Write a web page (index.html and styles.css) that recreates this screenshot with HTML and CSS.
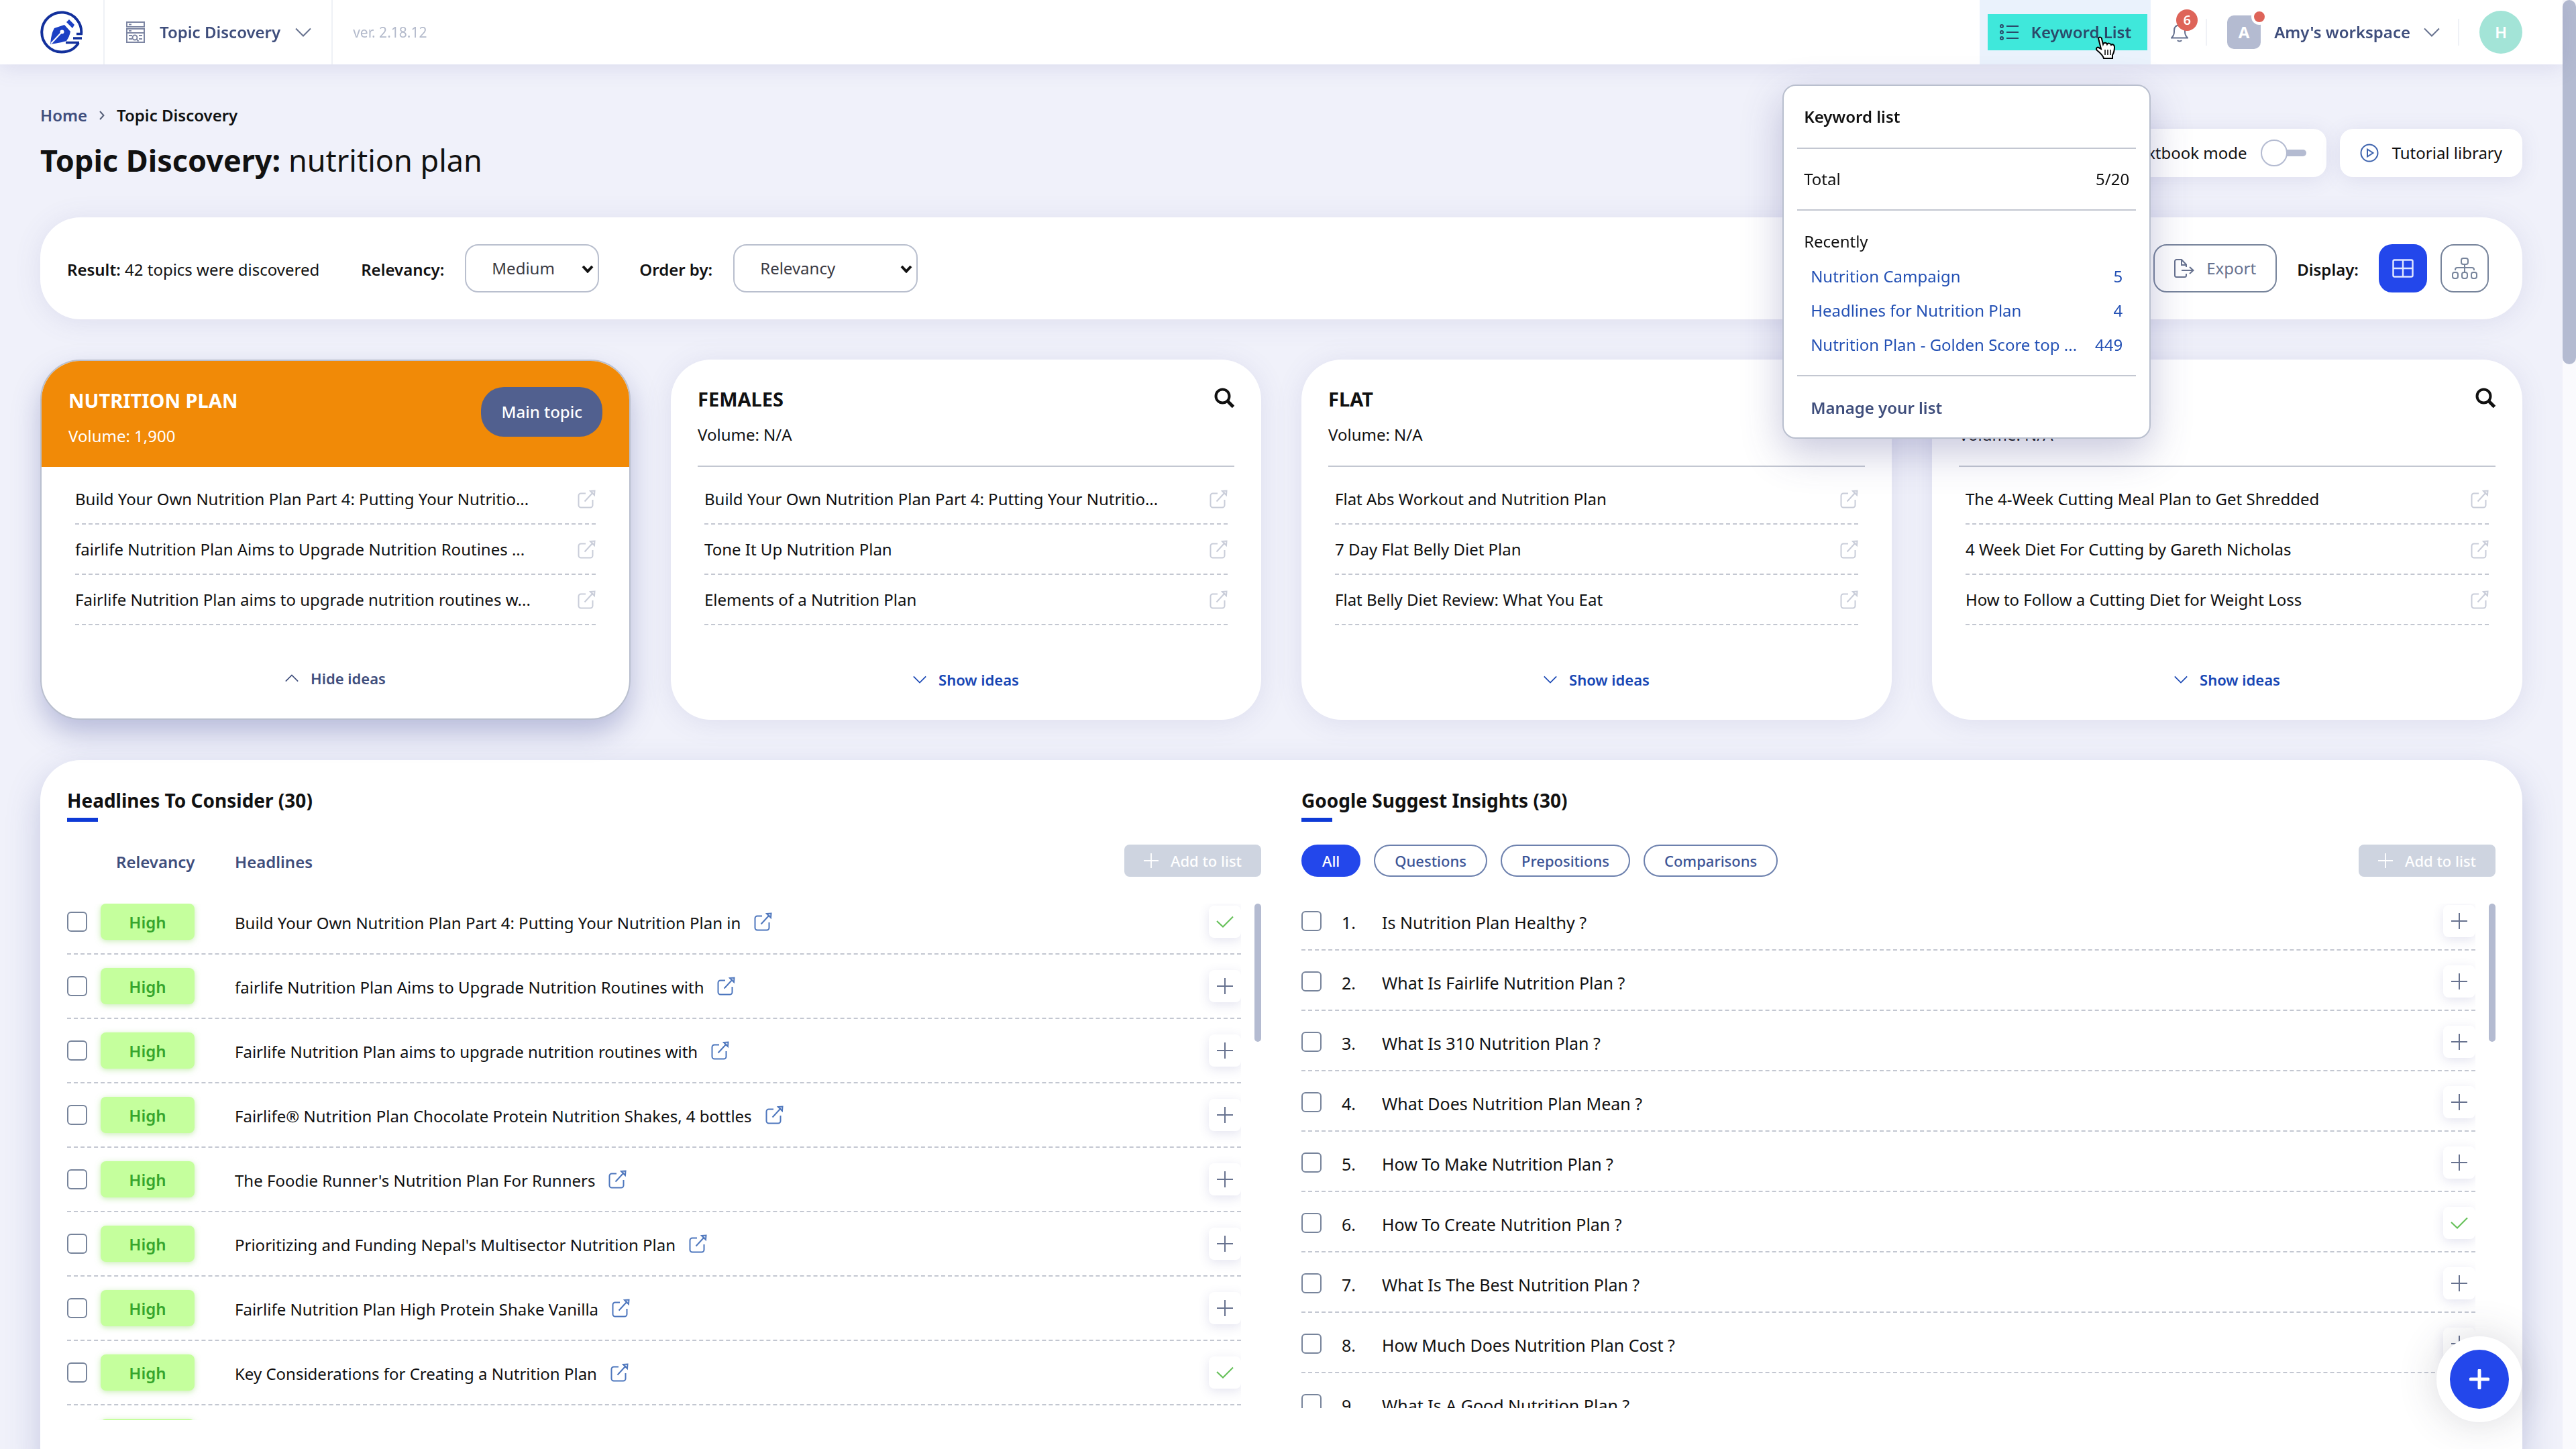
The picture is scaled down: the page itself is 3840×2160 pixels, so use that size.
FILE: index.html
```html
<!DOCTYPE html>
<html lang="en">
<head>
  <meta charset="UTF-8">
  <title>Topic Discovery</title>
  <link rel="stylesheet" href="styles.css">
</head>
<body>

  <!-- icon sprite -->
  <svg class="sprite" aria-hidden="true">
    <symbol id="i-down" viewBox="0 0 24 14"><path d="M1 1.5l11 11 11-11" fill="none" stroke="currentColor" stroke-width="2"/></symbol>
    <symbol id="i-up" viewBox="0 0 24 14"><path d="M1 12.500l11-11 11 11" fill="none" stroke="currentColor" stroke-width="2"/></symbol>
    <symbol id="i-caret" viewBox="0 0 18 12"><path d="M2 2l7 7.500 7-7.500" fill="none" stroke="currentColor" stroke-width="4"/></symbol>
    <symbol id="i-plus" viewBox="0 0 24 24"><path d="M12 0v24M0 12h24" fill="none" stroke="currentColor" stroke-width="2"/></symbol>
    <symbol id="i-check" viewBox="0 0 26 18"><path d="M1 8l9 8.500L25 1.500" fill="none" stroke="currentColor" stroke-width="2"/></symbol>
    <symbol id="i-ext" viewBox="0 0 27 28"><path d="M12 5.500H5a3.500 3.500 0 0 0-3.500 3.500v14A3.500 3.500 0 0 0 5 26.500h14a3.500 3.500 0 0 0 3.500-3.500v-8M10.500 17.500L23 4M19 2l6.500-.5-.5 6.500z" fill="none" stroke="currentColor" stroke-width="2"/></symbol>
    <symbol id="i-search" viewBox="0 0 30 30"><circle cx="12.500" cy="12.500" r="10" fill="none" stroke="currentColor" stroke-width="4"/><path d="M19.500 19.500l9 9" stroke="currentColor" stroke-width="5"/></symbol>
  </svg>

  <header class="topbar">
    <a class="logo" href="#" aria-label="Dashboard">
      <svg viewBox="0 0 64 64" width="64" height="64">
        <path d="M61 36A29.500 29.500 0 1 0 32 61.500c11 0 19.500-4.500 25-13.500" fill="none" stroke="#12309c" stroke-width="4"/>
        <path d="M38 47.500h20M49 41h13M54 34.500h8" stroke="#12309c" stroke-width="3.500"/>
        <path d="M15 50c1-10 2-17 6-24l15-5 9 10c-1 5-3 10-6 14-6 2-12 3-24 5z" fill="#1c40c4"/>
        <path d="M39 17l4-4 8 8-3 5z" fill="#1c40c4"/>
        <path d="M16 49l15-16" stroke="#fff" stroke-width="2"/>
        <circle cx="32.500" cy="31.500" r="3" fill="#fff"/>
      </svg>
    </a>
    <button class="nav-item">
      <svg viewBox="0 0 28 32" width="28" height="32" fill="none" stroke="currentColor" stroke-width="2">
        <rect x="1" y="1" width="26" height="7"/><rect x="1" y="11" width="26" height="20"/>
        <path d="M1 17h26M4 4.500h4M4 14h4M4 21h5M4 26h5M19 21h5M19 26h5"/><circle cx="13" cy="24" r="3.500"/><path d="M15.500 26.500l3 3"/>
      </svg>
      <span>Topic Discovery</span>
      <svg class="chev"><use href="#i-down"/></svg>
    </button>
    <span class="version">ver. 2.18.12</span>

    <div class="keyword-menu">
      <button class="keyword-btn">
        <svg viewBox="0 0 28 24" width="28" height="24" fill="none" stroke="currentColor" stroke-width="2">
          <circle cx="3" cy="3" r="2"/><circle cx="3" cy="12" r="2"/><circle cx="3" cy="21" r="2"/><path d="M10 3h18M10 12h18M10 21h18"/>
        </svg>
        <span>Keyword List</span>
      </button>
      <svg class="pointer" viewBox="0 0 32 36" width="32" height="36">
        <path d="M6 3c2-3 5-1 5 1l2 8c1-3 5-3 6 0 1-2 5-2 6 1 2-2 5 0 5 3 0 7-1 9-3 12v5H14c-1-4-5-8-10-12-3-3 1-6 4-3l2 1z" fill="#fff" stroke="#000" stroke-width="2"/>
        <path d="M16 20v8M20 20v8M24 20v8" stroke="#000" stroke-width="1.500"/>
      </svg>

      <div class="dropdown">
        <div class="dropdown-title">Keyword list</div>
        <div class="dropdown-total"><span>Total</span><span>5/20</span></div>
        <div class="dropdown-recent">
          <div class="recent-label">Recently</div>
          <a class="recent" href="#"><span>Nutrition Campaign</span><span>5</span></a>
          <a class="recent" href="#"><span>Headlines for Nutrition Plan</span><span>4</span></a>
          <a class="recent" href="#"><span>Nutrition Plan - Golden Score top ...</span><span>449</span></a>
        </div>
        <a class="manage" href="#">Manage your list</a>
      </div>
    </div>

    <button class="bell" aria-label="Notifications">
      <svg viewBox="0 0 26 32" width="26" height="32" fill="none" stroke="currentColor" stroke-width="2">
        <path d="M1 24.500c3-3 4-5 4-9v-2c0-5 3-8 8-8s8 3 8 8v2c0 4 1 6 4 9zM10 28c1 2 5 2 6 0"/>
      </svg>
      <span class="count">6</span>
    </button>
    <span class="sep"></span>
    <button class="workspace">
      <span class="ws-avatar">A</span>
      <span>Amy's workspace</span>
      <svg class="chev"><use href="#i-down"/></svg>
    </button>
    <span class="sep"></span>
    <button class="user">H</button>
  </header>

  <main class="page">
    <div class="page-head">
      <div>
        <nav class="breadcrumb">
          <a href="#">Home</a>
          <svg viewBox="0 0 8 14" width="8" height="14"><path d="M1 1l5.500 6L1 13" fill="none" stroke="#555f78" stroke-width="2"/></svg>
          <span>Topic Discovery</span>
        </nav>
        <h1>Topic Discovery: <span>nutrition plan</span></h1>
      </div>
      <div class="head-actions">
        <label class="head-card">Textbook mode <input type="checkbox" class="toggle"></label>
        <button class="head-card">
          <svg viewBox="0 0 28 28" width="28" height="28" fill="none" stroke="#3c62ad" stroke-width="2"><circle cx="14" cy="14" r="12.500"/><path d="M11 8.500l8.500 5.500-8.500 5.500z"/></svg>
          Tutorial library
        </button>
      </div>
    </div>

    <section class="filters">
      <p class="result"><b>Result:</b> 42 topics were discovered</p>
      <label for="relevancy">Relevancy:</label>
      <div class="select">
        <select id="relevancy"><option>Medium</option></select>
        <svg class="caret"><use href="#i-caret"/></svg>
      </div>
      <label for="order">Order by:</label>
      <div class="select wide">
        <select id="order"><option>Relevancy</option></select>
        <svg class="caret"><use href="#i-caret"/></svg>
      </div>
      <button class="export">
        <svg viewBox="0 0 30 28" width="30" height="28" fill="none" stroke="currentColor" stroke-width="2">
          <path d="M18 22v2.500a2.500 2.500 0 0 1-2.500 2.500h-12A2.500 2.500 0 0 1 1 24.500v-21A2.500 2.500 0 0 1 3.500 1H11l7 7.500V12M11 1v8h7M11 17h17M23 12l5.500 5-5.500 5"/>
        </svg>
        Export
      </button>
      <span class="display-label">Display:</span>
      <button class="view-btn active" aria-label="Grid view">
        <svg viewBox="0 0 32 28" width="32" height="28" fill="none" stroke="currentColor" stroke-width="2.500"><rect x="1.500" y="1.500" width="29" height="25" rx="2"/><path d="M16 1v26M1 14h30"/></svg>
      </button>
      <button class="view-btn" aria-label="Tree view">
        <svg viewBox="0 0 38 32" width="38" height="32" fill="none" stroke="currentColor" stroke-width="2">
          <rect x="14" y="1" width="10" height="9" rx="3"/><path d="M19 10v11M5 19v-1a3 3 0 0 1 3-3h22a3 3 0 0 1 3 3v1"/>
          <rect x="1" y="22" width="8" height="9" rx="3"/><rect x="15" y="22" width="8" height="9" rx="3"/><rect x="29" y="22" width="8" height="9" rx="3"/>
        </svg>
      </button>
    </section>

    <section class="cards">
      <article class="card main">
        <div class="card-head">
          <div>
            <h2>NUTRITION PLAN</h2>
            <p>Volume: 1,900</p>
          </div>
          <button class="main-topic">Main topic</button>
        </div>
        <ul class="ideas">
          <li><span>Build Your Own Nutrition Plan Part 4: Putting Your Nutritio...</span><svg><use href="#i-ext"/></svg></li>
          <li><span>fairlife Nutrition Plan Aims to Upgrade Nutrition Routines ...</span><svg><use href="#i-ext"/></svg></li>
          <li><span>Fairlife Nutrition Plan aims to upgrade nutrition routines w...</span><svg><use href="#i-ext"/></svg></li>
        </ul>
        <button class="toggle-ideas"><svg><use href="#i-up"/></svg>Hide ideas</button>
      </article>

      <article class="card">
        <div class="card-head">
          <div>
            <h2>FEMALES</h2>
            <p>Volume: N/A</p>
          </div>
          <button class="search" aria-label="Search"><svg><use href="#i-search"/></svg></button>
        </div>
        <ul class="ideas">
          <li><span>Build Your Own Nutrition Plan Part 4: Putting Your Nutritio...</span><svg><use href="#i-ext"/></svg></li>
          <li><span>Tone It Up Nutrition Plan</span><svg><use href="#i-ext"/></svg></li>
          <li><span>Elements of a Nutrition Plan</span><svg><use href="#i-ext"/></svg></li>
        </ul>
        <button class="toggle-ideas"><svg><use href="#i-down"/></svg>Show ideas</button>
      </article>

      <article class="card">
        <div class="card-head">
          <div>
            <h2>FLAT</h2>
            <p>Volume: N/A</p>
          </div>
        </div>
        <ul class="ideas">
          <li><span>Flat Abs Workout and Nutrition Plan</span><svg><use href="#i-ext"/></svg></li>
          <li><span>7 Day Flat Belly Diet Plan</span><svg><use href="#i-ext"/></svg></li>
          <li><span>Flat Belly Diet Review: What You Eat</span><svg><use href="#i-ext"/></svg></li>
        </ul>
        <button class="toggle-ideas"><svg><use href="#i-down"/></svg>Show ideas</button>
      </article>

      <article class="card">
        <div class="card-head">
          <div>
            <h2>&nbsp;</h2>
            <p>Volume: N/A</p>
          </div>
          <button class="search" aria-label="Search"><svg><use href="#i-search"/></svg></button>
        </div>
        <ul class="ideas">
          <li><span>The 4-Week Cutting Meal Plan to Get Shredded</span><svg><use href="#i-ext"/></svg></li>
          <li><span>4 Week Diet For Cutting by Gareth Nicholas</span><svg><use href="#i-ext"/></svg></li>
          <li><span>How to Follow a Cutting Diet for Weight Loss</span><svg><use href="#i-ext"/></svg></li>
        </ul>
        <button class="toggle-ideas"><svg><use href="#i-down"/></svg>Show ideas</button>
      </article>
    </section>

    <section class="panel">
      <div class="column">
        <h3>Headlines To Consider (30)</h3>
        <div class="toolbar">
          <span class="th-rel">Relevancy</span>
          <span>Headlines</span>
          <button class="add" disabled><svg><use href="#i-plus"/></svg>Add to list</button>
        </div>
        <div class="scroller">
          <ul class="rows headlines">
            <li><input type="checkbox" id="h1"><span class="badge">High</span><label for="h1">Build Your Own Nutrition Plan Part 4: Putting Your Nutrition Plan in</label><svg class="ext"><use href="#i-ext"/></svg><button class="row-btn done" aria-label="Added"><svg><use href="#i-check"/></svg></button></li>
            <li><input type="checkbox" id="h2"><span class="badge">High</span><label for="h2">fairlife Nutrition Plan Aims to Upgrade Nutrition Routines with</label><svg class="ext"><use href="#i-ext"/></svg><button class="row-btn" aria-label="Add"><svg><use href="#i-plus"/></svg></button></li>
            <li><input type="checkbox" id="h3"><span class="badge">High</span><label for="h3">Fairlife Nutrition Plan aims to upgrade nutrition routines with</label><svg class="ext"><use href="#i-ext"/></svg><button class="row-btn" aria-label="Add"><svg><use href="#i-plus"/></svg></button></li>
            <li><input type="checkbox" id="h4"><span class="badge">High</span><label for="h4">Fairlife® Nutrition Plan Chocolate Protein Nutrition Shakes, 4 bottles</label><svg class="ext"><use href="#i-ext"/></svg><button class="row-btn" aria-label="Add"><svg><use href="#i-plus"/></svg></button></li>
            <li><input type="checkbox" id="h5"><span class="badge">High</span><label for="h5">The Foodie Runner's Nutrition Plan For Runners</label><svg class="ext"><use href="#i-ext"/></svg><button class="row-btn" aria-label="Add"><svg><use href="#i-plus"/></svg></button></li>
            <li><input type="checkbox" id="h6"><span class="badge">High</span><label for="h6">Prioritizing and Funding Nepal's Multisector Nutrition Plan</label><svg class="ext"><use href="#i-ext"/></svg><button class="row-btn" aria-label="Add"><svg><use href="#i-plus"/></svg></button></li>
            <li><input type="checkbox" id="h7"><span class="badge">High</span><label for="h7">Fairlife Nutrition Plan High Protein Shake Vanilla</label><svg class="ext"><use href="#i-ext"/></svg><button class="row-btn" aria-label="Add"><svg><use href="#i-plus"/></svg></button></li>
            <li><input type="checkbox" id="h8"><span class="badge">High</span><label for="h8">Key Considerations for Creating a Nutrition Plan</label><svg class="ext"><use href="#i-ext"/></svg><button class="row-btn done" aria-label="Added"><svg><use href="#i-check"/></svg></button></li>
            <li><span class="badge blank"></span></li>
          </ul>
          <div class="thumb"></div>
        </div>
      </div>

      <div class="column">
        <h3>Google Suggest Insights (30)</h3>
        <div class="toolbar">
          <button class="chip active">All</button>
          <button class="chip">Questions</button>
          <button class="chip">Prepositions</button>
          <button class="chip">Comparisons</button>
          <button class="add" disabled><svg><use href="#i-plus"/></svg>Add to list</button>
        </div>
        <div class="scroller">
          <ul class="rows insights">
            <li><input type="checkbox" id="q1"><span class="num">1.</span><label for="q1">Is Nutrition Plan Healthy ?</label><button class="row-btn" aria-label="Add"><svg><use href="#i-plus"/></svg></button></li>
            <li><input type="checkbox" id="q2"><span class="num">2.</span><label for="q2">What Is Fairlife Nutrition Plan ?</label><button class="row-btn" aria-label="Add"><svg><use href="#i-plus"/></svg></button></li>
            <li><input type="checkbox" id="q3"><span class="num">3.</span><label for="q3">What Is 310 Nutrition Plan ?</label><button class="row-btn" aria-label="Add"><svg><use href="#i-plus"/></svg></button></li>
            <li><input type="checkbox" id="q4"><span class="num">4.</span><label for="q4">What Does Nutrition Plan Mean ?</label><button class="row-btn" aria-label="Add"><svg><use href="#i-plus"/></svg></button></li>
            <li><input type="checkbox" id="q5"><span class="num">5.</span><label for="q5">How To Make Nutrition Plan ?</label><button class="row-btn" aria-label="Add"><svg><use href="#i-plus"/></svg></button></li>
            <li><input type="checkbox" id="q6"><span class="num">6.</span><label for="q6">How To Create Nutrition Plan ?</label><button class="row-btn done" aria-label="Added"><svg><use href="#i-check"/></svg></button></li>
            <li><input type="checkbox" id="q7"><span class="num">7.</span><label for="q7">What Is The Best Nutrition Plan ?</label><button class="row-btn" aria-label="Add"><svg><use href="#i-plus"/></svg></button></li>
            <li><input type="checkbox" id="q8"><span class="num">8.</span><label for="q8">How Much Does Nutrition Plan Cost ?</label><button class="row-btn" aria-label="Add"><svg><use href="#i-plus"/></svg></button></li>
            <li><input type="checkbox" id="q9"><span class="num">9.</span><label for="q9">What Is A Good Nutrition Plan ?</label></li>
          </ul>
          <div class="thumb"></div>
        </div>
      </div>
    </section>
  </main>

  <button class="fab" aria-label="Create">
    <svg viewBox="0 0 30 30" width="30" height="30"><path d="M15 2v26M2 15h26" stroke="#fff" stroke-width="5" stroke-linecap="round"/></svg>
  </button>
  <div class="page-scroll"></div>

</body>
</html>
```
FILE: styles.css
```css
/* Colors
blue   : #2347eb
navy   : #3f4e7c
slate  : #77849b
orange : #f18a07
*/
*, *::before, *::after {
  box-sizing: border-box;
}
html, body {
  height: 100%;
}
body {
  margin: 0;
  padding-right: 20px;
  overflow: hidden;
  background: #f0f1fa;
  color: #111;
  font-family: 'Noto Sans', 'Open Sans', sans-serif;
  font-size: 24px;
  line-height: 32px;
}
h1, h2, h3, p, ul {
  margin: 0;
  padding: 0;
}
ul {
  list-style: none;
}
a {
  color: inherit;
  text-decoration: none;
}
svg {
  display: block;
  flex: none;
}
button {
  display: flex;
  align-items: center;
  justify-content: center;
  margin: 0;
  padding: 0;
  border: 0;
  background: none;
  color: inherit;
  font: inherit;
  white-space: nowrap;
  cursor: pointer;
}
.sprite {
  position: absolute;
  width: 0;
  height: 0;
}

/* top bar */
.topbar {
  position: relative;
  z-index: 2;
  display: flex;
  align-items: center;
  height: 96px;
  padding-right: 60px;
  background: #fff;
  box-shadow: 0 4px 30px rgba(90, 90, 160, .15);
}
.logo {
  display: flex;
  align-items: center;
  height: 100%;
  padding: 0 30px 0 60px;
  border-right: 2px solid #eff1f6;
}
.nav-item {
  height: 100%;
  gap: 22px;
  padding: 0 30px 0 32px;
  border-right: 2px solid #eff1f6;
  color: #3f4e7c;
  font-weight: 600;
}
.nav-item svg {
  color: #7d86a3;
}
.chev, .nav-item .chev {
  width: 24px;
  height: 14px;
  color: #67728f;
}
.version {
  margin-left: 30px;
  color: #b3bacb;
  font-size: 21px;
}
.keyword-menu {
  position: relative;
  display: flex;
  align-items: center;
  height: 100%;
  margin-left: auto;
  padding: 0 5px 0 12px;
  background: #eaf2fc;
}
.keyword-btn {
  height: 54px;
  gap: 18px;
  padding: 0 24px 0 18px;
  background: #3fe8db;
  color: #2b4a6b;
  font-weight: 600;
}
.pointer {
  position: absolute;
  right: 52px;
  top: 54px;
}
.bell {
  position: relative;
  margin: 0 26px 0 30px;
  color: #67728f;
}
.count {
  position: absolute;
  left: 8px;
  top: -18px;
  width: 32px;
  height: 32px;
  border-radius: 50%;
  background: #de6459;
  color: #fff;
  font-size: 20px;
  font-weight: 600;
}
.sep {
  width: 2px;
  height: 40px;
  background: #eff1f6;
}
.workspace {
  gap: 20px;
  margin: 0 27px 0 30px;
  color: #3f4e7c;
  font-weight: 600;
}
.ws-avatar {
  position: relative;
  width: 50px;
  height: 50px;
  border-radius: 10px;
  background: #b4bbd1;
  color: #fff;
  font-weight: 700;
  line-height: 50px;
}
.ws-avatar::after {
  content: '';
  position: absolute;
  right: -10px;
  top: -10px;
  width: 24px;
  height: 24px;
  border: 4px solid #fff;
  border-radius: 50%;
  background: #de6459;
}
.user {
  width: 64px;
  height: 64px;
  margin-left: 30px;
  border-radius: 50%;
  background: #a3e4d7;
  color: #fff;
  font-weight: 600;
}

/* keyword list menu */
.dropdown {
  position: absolute;
  right: 0;
  top: 126px;
  width: 549px;
  padding: 0 20px;
  border: 2px solid #b9bfce;
  border-radius: 20px;
  background: #fff;
  box-shadow: 0 20px 60px rgba(70, 70, 140, .3);
}
.dropdown-title {
  padding: 30px 10px;
  border-bottom: 2px solid #c3c7d1;
  font-weight: 600;
}
.dropdown-total {
  display: flex;
  justify-content: space-between;
  padding: 29px 10px;
  border-bottom: 2px solid #c3c7d1;
}
.dropdown-recent {
  padding: 30px 0 20px;
  border-bottom: 2px solid #c3c7d1;
}
.recent-label {
  padding: 0 10px 10px;
}
.recent {
  display: flex;
  justify-content: space-between;
  padding: 10px 20px;
  line-height: 31px;
  color: #2350b4;
}
.manage {
  display: block;
  padding: 31px 20px 28px;
  color: #3f4e7c;
  font-weight: 600;
}

/* page head */
.page {
  padding: 60px 60px 0;
}
.page-head {
  display: flex;
  align-items: flex-end;
  justify-content: space-between;
}
.breadcrumb {
  display: flex;
  align-items: center;
  gap: 18px;
  font-weight: 600;
}
.breadcrumb a {
  color: #3f4e7c;
}
h1 {
  margin-top: 26px;
  font-size: 45px;
  line-height: 50px;
  font-weight: 700;
}
h1 span {
  font-weight: 400;
}
.head-actions {
  display: flex;
  gap: 20px;
}
.head-card {
  display: flex;
  align-items: center;
  gap: 20px;
  height: 72px;
  padding: 0 30px;
  border-radius: 20px;
  background: #fff;
  box-shadow: 0 4px 30px rgba(90, 90, 160, .12);
}
.toggle {
  position: relative;
  appearance: none;
  width: 68px;
  height: 40px;
  margin: 0;
}
.toggle::before {
  content: '';
  position: absolute;
  right: 0;
  top: 15px;
  width: 40px;
  height: 10px;
  border-radius: 5px;
  background: #b4bbd1;
}
.toggle::after {
  content: '';
  position: absolute;
  left: 0;
  top: 0;
  width: 40px;
  height: 40px;
  border: 2px solid #b4bbd1;
  border-radius: 50%;
  background: #fff;
}

/* filters */
.filters {
  display: flex;
  align-items: center;
  height: 152px;
  margin-top: 60px;
  padding: 0 50px 0 40px;
  border-radius: 60px;
  background: #fff;
  box-shadow: 0 4px 40px rgba(90, 90, 160, .12);
}
.filters b, .filters label, .display-label {
  font-weight: 600;
}
.filters p, .filters label, .display-label {
  padding-top: 3px;
}
.result {
  margin-right: 62px;
}
.select {
  position: relative;
  width: 200px;
  margin: 0 60px 0 31px;
}
.select.wide {
  width: 275px;
}
select {
  appearance: none;
  width: 100%;
  height: 72px;
  padding: 0 38px;
  border: 2px solid #b9bfce;
  border-radius: 20px;
  background: #fff;
  color: #3a3a44;
  font: inherit;
}
.caret {
  position: absolute;
  right: 8px;
  top: 31px;
  width: 18px;
  height: 12px;
}
.export {
  height: 72px;
  gap: 18px;
  margin: 0 30px 0 auto;
  padding: 0 29px;
  border: 2px solid #77849b;
  border-radius: 20px;
  color: #67728f;
}
.view-btn {
  width: 72px;
  height: 72px;
  margin-left: 20px;
  border: 2px solid #77849b;
  border-radius: 20px;
  color: #77849b;
}
.view-btn.active {
  margin-left: 30px;
  border-color: #2347eb;
  background: #2347eb;
  color: #dfe6ff;
}

/* topic cards */
.cards {
  display: grid;
  grid-template-columns: repeat(4, 1fr);
  gap: 60px;
  margin-top: 60px;
}
.card {
  overflow: hidden;
  padding-bottom: 44px;
  border-radius: 60px;
  background: #fff;
  box-shadow: 0 4px 40px rgba(90, 90, 160, .12);
}
.card-head {
  display: flex;
  justify-content: space-between;
  align-items: flex-start;
  height: 160px;
  margin: 0 40px;
  padding-top: 39px;
  border-bottom: 2px solid #c3c7d1;
}
.card h2 {
  margin-bottom: 17px;
  font-size: 29px;
  line-height: 40px;
  font-weight: 700;
}
.card.main {
  padding-bottom: 42px;
  border: 2px solid #b9bfce;
  box-shadow: 0 20px 40px rgba(80, 90, 160, .35);
}
.card.main .card-head {
  height: 158px;
  margin: 0;
  padding: 39px 40px 0;
  border: 0;
  background: #f18a07;
  color: #fff;
}
.main-topic {
  height: 74px;
  padding: 0 30px;
  border-radius: 34px;
  background: #51608f;
  font-weight: 500;
}
.search {
  margin-top: 3px;
}
.search svg {
  width: 30px;
  height: 30px;
}
.ideas {
  padding: 11px 50px 0;
}
.ideas li {
  display: flex;
  align-items: center;
  justify-content: space-between;
  height: 75px;
  border-bottom: 2px dashed #c3c7d1;
}
.ideas span {
  white-space: nowrap;
}
.ideas svg {
  width: 27px;
  height: 28px;
  color: #c9cdd9;
}
.toggle-ideas {
  gap: 18px;
  margin: 65px auto 0;
  color: #1746b4;
  font-size: 22px;
  font-weight: 600;
}
.main .toggle-ideas {
  margin-top: 63px;
  margin-bottom: 2px;
  color: #3f4e7c;
}
.toggle-ideas svg {
  width: 20px;
  height: 12px;
}

/* headlines and insights */
.panel {
  display: grid;
  grid-template-columns: 1fr 1fr;
  gap: 60px;
  margin-top: 60px;
  padding: 40px 40px 100px;
  border-radius: 60px;
  background: #fff;
  box-shadow: 0 20px 50px rgba(80, 90, 160, .28);
}
h3 {
  font-size: 28px;
  line-height: 40px;
  font-weight: 700;
}
h3::after {
  content: '';
  display: block;
  width: 46px;
  height: 6px;
  margin-top: 6px;
  background: #0e3ad6;
}
.toolbar {
  display: flex;
  align-items: center;
  gap: 20px;
  height: 48px;
  margin: 34px 0 40px;
  color: #3f4e7c;
  font-weight: 500;
}
.toolbar span {
  padding-top: 3px;
  font-weight: 600;
}
.toolbar .th-rel {
  width: 230px;
  padding-left: 73px;
}
.add {
  height: 48px;
  gap: 18px;
  margin-left: auto;
  padding: 0 29px;
  border-radius: 8px;
  background: #ced4e0;
  color: #fff;
  font-size: 22px;
}
.add svg {
  width: 22px;
  height: 22px;
}
.chip {
  height: 48px;
  padding: 0 29px;
  border: 2px solid #6c80ad;
  border-radius: 24px;
  color: #3c5496;
  font-size: 22px;
}
.chip.active {
  border-color: #2347eb;
  background: #2347eb;
  color: #fff;
}
.scroller {
  display: flex;
  gap: 20px;
}
.rows {
  flex: 1;
  overflow: hidden;
}
.rows li {
  display: flex;
  align-items: center;
  border-bottom: 2px dashed #c3c7d1;
}
.rows label, .num {
  padding-top: 3px;
}
.headlines {
  height: 770px;
}
.headlines li {
  height: 96px;
}
.headlines li:first-child {
  height: 76px;
  padding-bottom: 20px;
}
.insights {
  height: 752px;
  font-size: 25px;
}
.insights li {
  height: 90px;
  padding-top: 4px;
}
.insights li:first-child {
  height: 70px;
  padding: 2px 0 18px;
}
.rows input {
  appearance: none;
  width: 30px;
  height: 30px;
  margin: 0 20px 0 0;
  border: 2px solid #77849b;
  border-radius: 6px;
}
.badge {
  width: 140px;
  height: 54px;
  margin-right: 60px;
  border-radius: 8px;
  background: #c5ff9d;
  box-shadow: 0 2px 8px rgba(150, 220, 110, .5);
  color: #36a52c;
  font-weight: 600;
  line-height: 56px;
  text-align: center;
}
.badge.blank {
  margin-left: 50px;
}
.ext {
  width: 27px;
  height: 28px;
  margin-left: 20px;
  color: #4d76bd;
}
.num {
  width: 70px;
  padding-left: 10px;
}
.row-btn {
  width: 48px;
  height: 48px;
  margin-left: auto;
  border-radius: 8px;
  background: #fff;
  box-shadow: 0 4px 16px rgba(90, 90, 160, .16);
  color: #67728f;
}
.row-btn svg {
  width: 24px;
  height: 24px;
}
.row-btn.done svg {
  width: 26px;
  height: 18px;
  color: #62bf55;
}
.thumb {
  width: 10px;
  height: 206px;
  border-radius: 5px;
  background: #b4bbd1;
}

.fab {
  position: fixed;
  right: 80px;
  bottom: 40px;
  width: 128px;
  height: 128px;
  border: 20px solid #fff;
  border-radius: 50%;
  background: #2347eb;
  box-shadow: 0 0 60px rgba(60, 60, 80, .2);
}
.page-scroll {
  position: fixed;
  right: 0;
  top: 0;
  width: 20px;
  height: 100%;
  background: #fafafd;
}
.page-scroll::before {
  content: '';
  display: block;
  height: 543px;
  border-radius: 10px;
  background: #b4bbd1;
}
```
